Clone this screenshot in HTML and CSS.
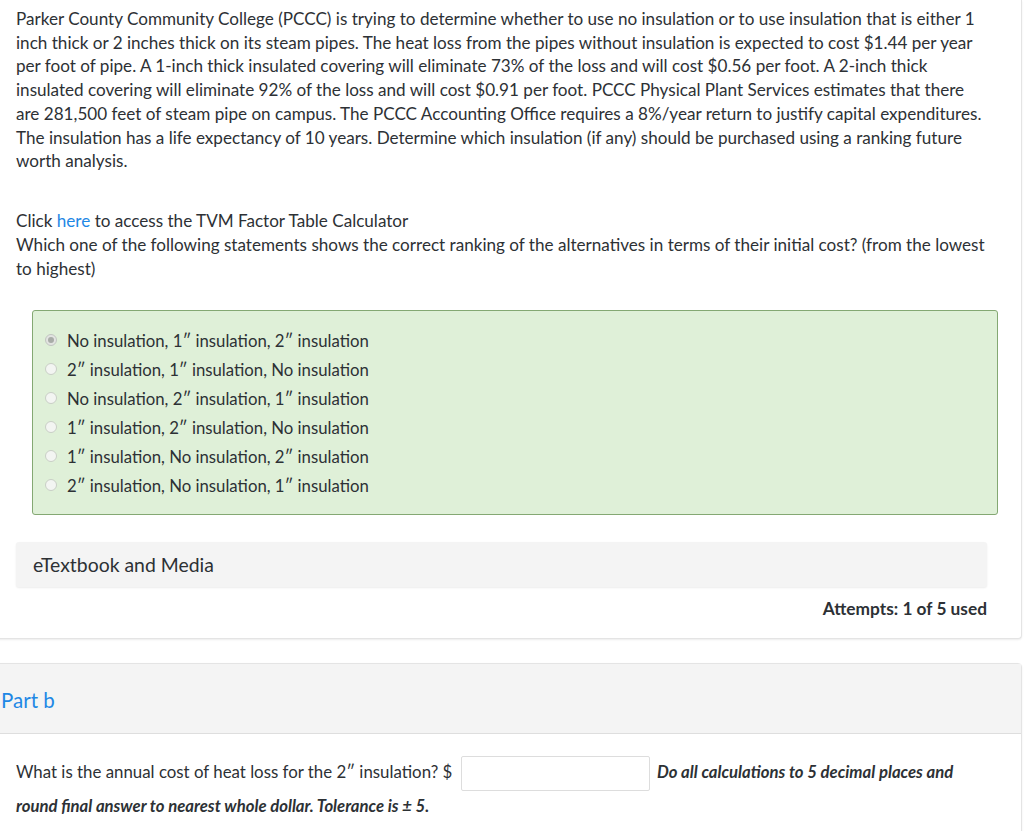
FILE: index.html
```html
<!DOCTYPE html>
<html>
<head>
<meta charset="utf-8">
<link rel="stylesheet" href="styles.css">
</head>
<body>
<div class="card">
  <div class="card-body">
    <p class="question">Parker County Community College (PCCC) is trying to determine whether to use no insulation or to use insulation that is either 1 inch thick or 2 inches thick on its steam pipes. The heat loss from the pipes without insulation is expected to cost $1.44 per year per foot of pipe. A 1-inch thick insulated covering will eliminate 73% of the loss and will cost $0.56 per foot. A 2-inch thick insulated covering will eliminate 92% of the loss and will cost $0.91 per foot. PCCC Physical Plant Services estimates that there are 281,500 feet of steam pipe on campus. The PCCC Accounting Office requires a 8%/year return to justify capital expenditures. The insulation has a life expectancy of 10 years. Determine which insulation (if any) should be purchased using a ranking future worth analysis.</p>
    <p class="prompt">Click <a class="link" href="#">here</a> to access the TVM Factor Table Calculator<br>Which one of the following statements shows the correct ranking of the alternatives in terms of their initial cost? (from the lowest to highest)</p>
    <div class="choices">
      <label class="choice"><span class="radio checked"></span>No insulation, 1″ insulation, 2″ insulation</label>
      <label class="choice"><span class="radio"></span>2″ insulation, 1″ insulation, No insulation</label>
      <label class="choice"><span class="radio"></span>No insulation, 2″ insulation, 1″ insulation</label>
      <label class="choice"><span class="radio"></span>1″ insulation, 2″ insulation, No insulation</label>
      <label class="choice"><span class="radio"></span>1″ insulation, No insulation, 2″ insulation</label>
      <label class="choice"><span class="radio"></span>2″ insulation, No insulation, 1″ insulation</label>
    </div>
    <div class="media">eTextbook and Media</div>
    <div class="attempts">Attempts: 1 of 5 used</div>
  </div>
</div>
<div class="card part">
  <div class="part-header">Part b</div>
  <div class="part-body">
    <p class="fill">What is the annual cost of heat loss for the 2″ insulation? $ <span class="input"></span> <em class="note">Do all calculations to 5 decimal places and round final answer to nearest whole dollar. Tolerance is ± 5.</em></p>
  </div>
</div>
</body>
</html>
```
FILE: styles.css
```css
html, body {
  margin: 0;
  padding: 0;
  background: #fff;
}
body {
  font-family: Lato, "Open Sans", sans-serif;
  color: #2d3135;
  font-size: 16.75px;
  overflow: hidden;
}
.card {
  width: 1026px;
  margin-left: -6px;
  background: #fff;
  border: 1px solid #e4e4e4;
  border-top: none;
  border-radius: 0 0 4px 0;
  box-shadow: 0 1px 2px rgba(0,0,0,0.08);
}
.card-body {
  padding: 7px 34px 18px 21px;
}
.question {
  margin: 0;
  font-size: 17.1px;
  line-height: 23.7px;
}
.prompt {
  margin: 36px 0 0;
  font-size: 17.1px;
  line-height: 24px;
}
.link {
  color: #1e88e5;
  text-decoration: none;
}
.choices {
  margin: 29px -11px 0 16px;
  background: #dff0d8;
  border: 1px solid #84a873;
  border-radius: 3px;
  padding: 15px 0 14px 12px;
  display: flex;
  flex-direction: column;
}
.choice {
  display: flex;
  align-items: center;
  height: 29px;
  line-height: 29px;
}
.radio {
  width: 12px;
  height: 12px;
  border: 1px solid #c9cfc6;
  border-radius: 50%;
  background: #f3f5f2;
  margin: 0 10px 0 0;
  box-sizing: border-box;
  position: relative;
}
.radio.checked {
  background: #e2e4e1;
  border-color: #c2c6c1;
}
.radio.checked::after {
  content: "";
  position: absolute;
  left: 2px;
  top: 2px;
  width: 6px;
  height: 6px;
  border-radius: 50%;
  background: #a8aca7;
}
.media {
  margin-top: 27px;
  background: #f4f4f4;
  border-radius: 3px;
  box-shadow: 0 1px 2px rgba(0,0,0,0.08);
  padding: 0 17px;
  height: 45px;
  line-height: 45px;
  font-size: 19.4px;
}
.attempts {
  text-align: right;
  font-weight: bold;
  font-size: 17.3px;
  margin-top: 11px;
  line-height: 22px;
}
.part {
  margin-top: 24px;
  border-top: 1px solid #e4e4e4;
  border-radius: 0 4px 0 0;
  height: 200px;
}
.part-header {
  background: #f4f4f4;
  border-bottom: 1px solid #dedede;
  height: 69px;
  line-height: 72px;
  padding-left: 6px;
  color: #1e88e5;
  font-size: 20.5px;
}
.part-body {
  padding: 21px 32px 20px 21px;
}
.fill {
  margin: 0;
  font-size: 16.85px;
  line-height: 33px;
}
.input {
  display: inline-block;
  width: 187px;
  height: 33px;
  margin: -2px 3px -2px 4px;
  border: 1px solid #ddd;
  border-radius: 2px;
  vertical-align: middle;
}
.note {
  font-weight: bold;
  font-style: italic;
  font-size: 16.7px;
}
```
